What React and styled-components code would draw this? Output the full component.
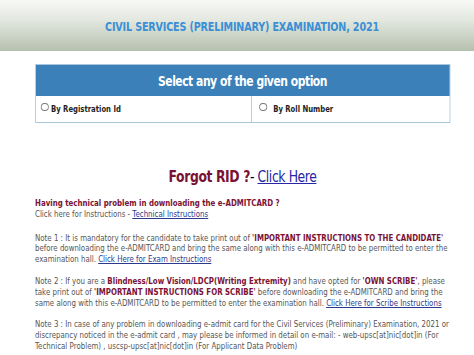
import React from "react";
import styled, { createGlobalStyle } from "styled-components";

const SCALE = 0.8;

const Global = createGlobalStyle`
  html, body { margin: 0; padding: 0; background: #fff; }
  body {
    font-family: "DejaVu Sans", Verdana, Tahoma, sans-serif;
    width: 474px;
    height: 355px;
    overflow: hidden;
  }
`;

/* The reference is a horizontally condensed page: lay it out at natural width, then condense. */
const Page = styled.div`
  width: ${474 / SCALE}px;
  transform: scaleX(${SCALE});
  transform-origin: 0 0;
`;

const Header = styled.header`
  height: 51px;
  background: linear-gradient(to bottom, #f8f9f6 0%, #e2e7df 40%, #b6c0ae 100%);
  display: flex;
  align-items: center;
  justify-content: center;
  padding: 3px 0 0 ${10 / SCALE}px;
  box-sizing: border-box;
`;

const Title = styled.h1`
  margin: 0;
  font-size: 12px;
  letter-spacing: -0.2px;
  font-weight: bold;
  color: #3a8fd6;
`;

const Content = styled.main`
  padding: 13px 0 0 ${35 / SCALE}px;
`;

const OptionTable = styled.div`
  width: ${415 / SCALE}px;
  border: 1px solid #a9c6da;
  box-sizing: border-box;
`;

const TableHead = styled.div`
  height: 31px;
  background: #3b80b9;
  color: #fff;
  font-weight: bold;
  font-size: 13.5px;
  letter-spacing: -0.6px;
  display: flex;
  align-items: center;
  justify-content: center;
  padding-top: 1px;
  box-sizing: border-box;
`;

const OptionRow = styled.div`
  display: grid;
  grid-template-columns: ${215 / SCALE}px 1fr;
  height: 26px;
`;

const OptionCell = styled.label`
  display: flex;
  align-items: center;
  gap: ${p => p.$gap}px;
  padding-left: ${p => p.$pad}px;
  font-size: 8.6px;
  font-weight: bold;
  color: #1e1e1e;
  border-left: ${p => (p.$divider ? "1px solid #a9c6da" : "none")};
`;

const Radio = styled.span`
  width: 8px;
  height: 6.5px;
  border: 1px solid #7a7a7a;
  border-radius: 50%;
  margin-top: -4px;
  background: #fff;
  flex: none;
`;

const Forgot = styled.div`
  margin-top: 45px;
  text-align: center;
  font-size: 15.5px;
  letter-spacing: -0.5px;
  line-height: 19px;
  padding-right: ${24 / SCALE}px;
`;

const ForgotLabel = styled.span`
  color: #7a1235;
  font-weight: bold;
`;

const Link = styled.a`
  color: ${p => (p.$dark ? "#2b3a8c" : "#2626a6")};
  text-decoration: underline;
  font-weight: normal;
`;

const Notes = styled.div`
  margin-top: 11px;
  font-size: 8.8px;
  line-height: 10.8px;
  color: #555555;
  white-space: nowrap;
`;

const Para = styled.p`
  margin: 0 0 ${p => p.$gap}px 0;
`;

const Strong = styled.b`
  color: #7a1235;
`;

export default function App() {
  return (
    <>
      <Global />
      <Page>
        <Header>
          <Title>CIVIL SERVICES (PRELIMINARY) EXAMINATION, 2021</Title>
        </Header>
        <Content>
          <OptionTable>
            <TableHead>Select any of the given option</TableHead>
            <OptionRow>
              <OptionCell $pad={6} $gap={3}>
                <Radio />
                By Registration Id
              </OptionCell>
              <OptionCell $pad={9} $gap={8} $divider>
                <Radio />
                By Roll Number
              </OptionCell>
            </OptionRow>
          </OptionTable>
          <Forgot>
            <ForgotLabel>Forgot RID ?</ForgotLabel>- <Link>Click Here</Link>
          </Forgot>
          <Notes>
            <Para $gap={13}>
              <Strong>Having technical problem in downloading the e-ADMITCARD ?</Strong>
              <br />
              Click here for Instructions - <Link $dark>Technical Instructions</Link>
            </Para>
            <Para $gap={11}>
              Note 1 : It is mandatory for the candidate to take print out of{" "}
              <Strong>'IMPORTANT INSTRUCTIONS TO THE CANDIDATE'</Strong>
              <br />
              before downloading the e-ADMITCARD and bring the same along with this e-ADMITCARD to be
              permitted to enter the
              <br />
              examination hall. <Link $dark>Click Here for Exam Instructions</Link>
            </Para>
            <Para $gap={11}>
              Note 2 : If you are a <Strong>Blindness/Low Vision/LDCP(Writing Extremity)</Strong> and
              have opted for <Strong>'OWN SCRIBE'</Strong>, please
              <br />
              take print out of <Strong>'IMPORTANT INSTRUCTIONS FOR SCRIBE'</Strong> before
              downloading the e-ADMITCARD and bring the
              <br />
              same along with this e-ADMITCARD to be permitted to enter the examination hall.{" "}
              <Link $dark>Click Here for Scribe Instructions</Link>
            </Para>
            <Para $gap={0}>
              Note 3 : In case of any problem in downloading e-admit card for the Civil Services
              (Preliminary) Examination, 2021 or
              <br />
              discrepancy noticed in the e-admit card , may please be informed in detail on e-mail: -
              web-upsc[at]nic[dot]in (For
              <br />
              Technical Problem) , uscsp-upsc[at]nic[dot]in (For Applicant Data Problem)
            </Para>
          </Notes>
        </Content>
      </Page>
    </>
  );
}
